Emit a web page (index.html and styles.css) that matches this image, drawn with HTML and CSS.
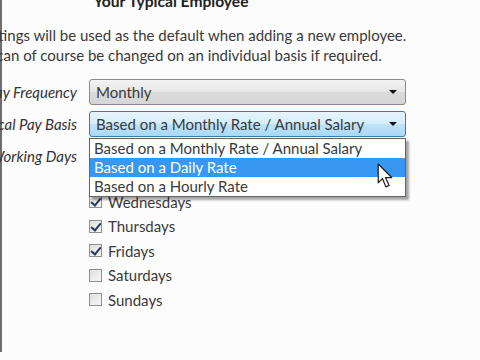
FILE: index.html
```html
<!DOCTYPE html>
<html>
<head>
<meta charset="utf-8">
<link rel="stylesheet" href="styles.css">
</head>
<body>
<div class="window">
  <div class="head">
    <div class="title">Your Typical Employee</div>
    <p>These settings will be used as the default when adding a new employee.</p>
    <p>They can of course be changed on an individual basis if required.</p>
  </div>
  <div class="form">
    <div class="label"><span>Pay Frequency</span></div>
    <div class="combo">
      <span>Monthly</span>
      <span class="arrow"></span>
    </div>
    <div class="label"><span>Typical Pay Basis</span></div>
    <div class="combo-wrap">
      <div class="combo open">
        <span>Based on a Monthly Rate / Annual Salary</span>
        <span class="arrow"></span>
      </div>
      <ul class="list">
        <li>Based on a Monthly Rate / Annual Salary</li>
        <li class="sel">Based on a Daily Rate</li>
        <li>Based on a Hourly Rate</li>
      </ul>
      <svg class="cursor" width="17" height="27" viewBox="0 0 16 26">
        <path d="M1 1 L1 19 L5 15 L8.5 23 L11.5 21.6 L8 14 L14 14 Z" fill="#fff" stroke="#222" stroke-width="1.2" stroke-linejoin="round"/>
      </svg>
    </div>
    <div class="label days"><span>Working Days</span></div>
    <div class="checks">
      <label class="check"><span class="box on"></span>Mondays</label>
      <label class="check"><span class="box on"></span>Tuesdays</label>
      <label class="check"><span class="box on"></span>Wednesdays</label>
      <label class="check"><span class="box on"></span>Thursdays</label>
      <label class="check"><span class="box on"></span>Fridays</label>
      <label class="check"><span class="box"></span>Saturdays</label>
      <label class="check"><span class="box"></span>Sundays</label>
    </div>
  </div>
</div>
</body>
</html>
```
FILE: styles.css
```css
html, body {
  margin: 0;
  padding: 0;
  background: #fcfcfc;
}
body {
  width: 480px;
  height: 360px;
  overflow: hidden;
  font-family: Lato, "Open Sans", sans-serif;
  font-size: 15px;
  color: #3a3a3a;
}
.window {
  height: 360px;
  border-left: 2px solid #6e6e6e;
  box-sizing: border-box;
}
.head {
  width: 338px;
  margin-top: -8px;
  display: flex;
  flex-direction: column;
  align-items: center;
}
.title {
  font-weight: bold;
  font-size: 15.6px;
  line-height: 18px;
  color: #222;
  white-space: nowrap;
  margin-bottom: 15px;
}
.head p {
  margin: 0;
  line-height: 20px;
  white-space: nowrap;
}
.form {
  margin-top: 14px;
  display: grid;
  grid-template-columns: 75px 317px;
  column-gap: 12px;
  row-gap: 6px;
}
.label {
  display: flex;
  justify-content: flex-end;
  align-items: center;
  font-style: italic;
  white-space: nowrap;
  color: #333;
}
.label.days {
  align-items: flex-start;
  padding-top: 6px;
  margin-top: -2px;
}
.combo {
  height: 26px;
  box-sizing: border-box;
  border: 1px solid #8a8a8a;
  border-radius: 3px;
  background: linear-gradient(#f3f3f3, #e6e6e6 50%, #dadada 51%, #d6d6d6);
  display: flex;
  align-items: center;
  justify-content: space-between;
  padding: 0 8px 0 6px;
  white-space: nowrap;
}
.combo.open {
  border-color: #3b7cad;
  background: linear-gradient(#e6f4fc, #d5edfb 50%, #bfe3f9 51%, #a9d8f5);
}
.arrow {
  width: 0;
  height: 0;
  border-left: 4px solid transparent;
  border-right: 4px solid transparent;
  border-top: 4px solid #111;
}
.combo-wrap {
  position: relative;
}
.list {
  position: absolute;
  left: 0;
  top: 27px;
  width: 317px;
  margin: 0;
  padding: 0;
  list-style: none;
  box-sizing: border-box;
  border: 1px solid #646464;
  background: #fff;
  box-shadow: 3px 3px 2px rgba(0, 0, 0, 0.35);
  z-index: 2;
}
.list li {
  height: 19px;
  line-height: 19px;
  padding-left: 4px;
  white-space: nowrap;
}
.list li.sel {
  background: #3797f2;
  color: #fff;
}
.cursor {
  position: absolute;
  left: 288px;
  top: 52px;
  z-index: 3;
}
.checks {
  grid-column: 2;
  display: flex;
  flex-direction: column;
  margin-top: -2px;
}
.check {
  height: 24.4px;
  display: flex;
  align-items: center;
  gap: 6px;
  white-space: nowrap;
}
.box {
  width: 13px;
  height: 13px;
  box-sizing: border-box;
  border: 1px solid #8e8f8f;
  background: linear-gradient(135deg, #dedede, #f8f8f8);
  position: relative;
}
.box.on::after {
  content: "";
  position: absolute;
  left: 3px;
  top: 0px;
  width: 4px;
  height: 8px;
  border-right: 2px solid #2a3a5a;
  border-bottom: 2px solid #2a3a5a;
  transform: rotate(40deg);
}
```
